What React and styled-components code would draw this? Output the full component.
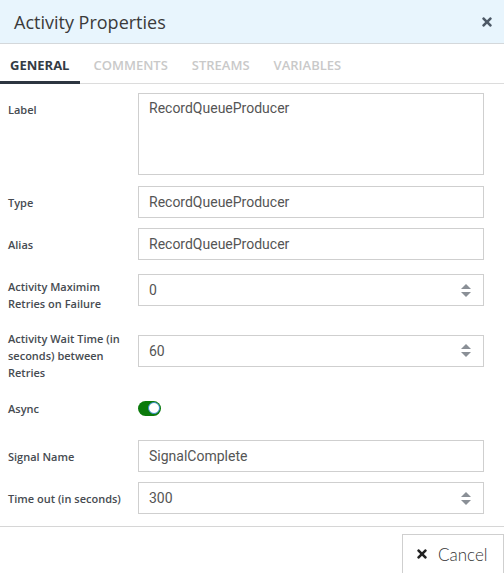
import React from "react";
import styled, { createGlobalStyle } from "styled-components";
import { FaTimes } from "react-icons/fa";

const GlobalStyle = createGlobalStyle`
body {
  margin: 0;
  background: #fff;
  font-family: "Open Sans", sans-serif;
}
`;

const Dialog = styled.div`
width: 504px;
height: 573px;
display: flex;
flex-direction: column;
background: #fff;
overflow: hidden;
& > * {
  flex-shrink: 0;
}
`;

const Header = styled.div`
display: flex;
align-items: center;
justify-content: space-between;
height: 43px;
padding: 0 10px 0 14px;
background: #e8f5fd;
border-bottom: 1px solid #d4d8db;
`;

const Title = styled.div`
font-size: 18px;
color: #3a3a3a;
`;

const CloseButton = styled.button`
display: flex;
border: 0;
padding: 0;
background: none;
color: #4d5966;
font-size: 14px;
`;

const Tabs = styled.div`
display: flex;
height: 39px;
border-bottom: 1px solid #dcdcdc;
`;

const Tab = styled.div`
display: flex;
align-items: center;
padding: 4px 11px 0 10px;
margin-right: 3px;
font-size: 13px;
font-weight: ${(p) => (p.active ? 700 : 600)};
text-transform: uppercase;
color: ${(p) => (p.active ? "#333b44" : "#c9c9c9")};
border-bottom: 3px solid ${(p) => (p.active ? "#2d3540" : "transparent")};
margin-bottom: -1px;
`;

const Body = styled.div`
padding: 9px 20px 12px 8px;
border-bottom: 1px solid #d6d6d6;
`;

const Row = styled.div`
display: grid;
grid-template-columns: 130px 346px;
align-items: ${(p) => (p.top ? "start" : "center")};
margin-top: ${(p) => p.gap || 0}px;
min-height: ${(p) => (p.minH ? p.minH + "px" : "auto")};
`;

const Label = styled.div`
font-size: 11px;
font-weight: 600;
line-height: 17px;
color: #464b51;
padding-top: ${(p) => p.pad || 0}px;
padding-right: 10px;
`;

const Field = styled.div`
display: flex;
align-items: ${(p) => (p.area ? "flex-start" : "center")};
height: ${(p) => (p.area ? 82 : 32)}px;
box-sizing: border-box;
border: 1px solid #cfcfcf;
padding: ${(p) => (p.area ? "6px 10px" : "0 12px 0 10px")};
font-family: Roboto, "Open Sans", sans-serif;
font-size: 14px;
color: #555;
`;

const Value = styled.span`
flex: 1;
`;

const Spinner = styled.div`
display: flex;
flex-direction: column;
gap: 3px;
`;

const Arrow = styled.span`
width: 0;
height: 0;
border-left: 5px solid transparent;
border-right: 5px solid transparent;
${(p) =>
  p.down
    ? "border-top: 5px solid #8a8f96;"
    : "border-bottom: 5px solid #8a8f96;"}
`;

const Toggle = styled.div`
width: 23px;
height: 15px;
box-sizing: border-box;
border-radius: 8px;
background: #0b7a0b;
display: flex;
justify-content: flex-end;
align-items: center;
padding: 1px;
`;

const Knob = styled.div`
width: 12px;
height: 12px;
border-radius: 50%;
background: #fff;
border: 1px solid #3a8ec9;
box-sizing: border-box;
`;

const Footer = styled.div`
display: flex;
justify-content: flex-end;
padding-top: 7px;
height: 46px;
`;

const CancelButton = styled.button`
display: flex;
align-items: center;
gap: 9px;
width: 102px;
height: 40px;
box-sizing: border-box;
padding: 0 0 0 12px;
background: #fff;
border: 1px solid #cfcfcf;
font-family: Lato, sans-serif;
font-weight: 300;
font-size: 17px;
color: #333;
svg {
  color: #222;
  font-size: 14px;
}
`;

const NumberField = ({ value }) => (
  <Field>
    <Value>{value}</Value>
    <Spinner>
      <Arrow />
      <Arrow down />
    </Spinner>
  </Field>
);

const App = () => {
  return (
    <Dialog>
      <GlobalStyle />
      <Header>
        <Title>Activity Properties</Title>
        <CloseButton>
          <FaTimes />
        </CloseButton>
      </Header>
      <Tabs>
        <Tab active>General</Tab>
        <Tab>Comments</Tab>
        <Tab>Streams</Tab>
        <Tab>Variables</Tab>
      </Tabs>
      <Body>
        <Row top>
          <Label pad={8}>Label</Label>
          <Field area>RecordQueueProducer</Field>
        </Row>
        <Row gap={11}>
          <Label>Type</Label>
          <Field>RecordQueueProducer</Field>
        </Row>
        <Row gap={10}>
          <Label>Alias</Label>
          <Field>RecordQueueProducer</Field>
        </Row>
        <Row gap={8}>
          <Label pad={10}>Activity Maximim Retries on Failure</Label>
          <NumberField value="0" />
        </Row>
        <Row gap={8}>
          <Label pad={10}>Activity Wait Time (in seconds) between Retries</Label>
          <NumberField value="60" />
        </Row>
        <Row gap={11} minH={32}>
          <Label>Async</Label>
          <Toggle>
            <Knob />
          </Toggle>
        </Row>
        <Row gap={16}>
          <Label>Signal Name</Label>
          <Field>SignalComplete</Field>
        </Row>
        <Row gap={10}>
          <Label>Time out (in seconds)</Label>
          <NumberField value="300" />
        </Row>
      </Body>
      <Footer>
        <CancelButton>
          <FaTimes />
          Cancel
        </CancelButton>
      </Footer>
    </Dialog>
  );
};

export default App;
